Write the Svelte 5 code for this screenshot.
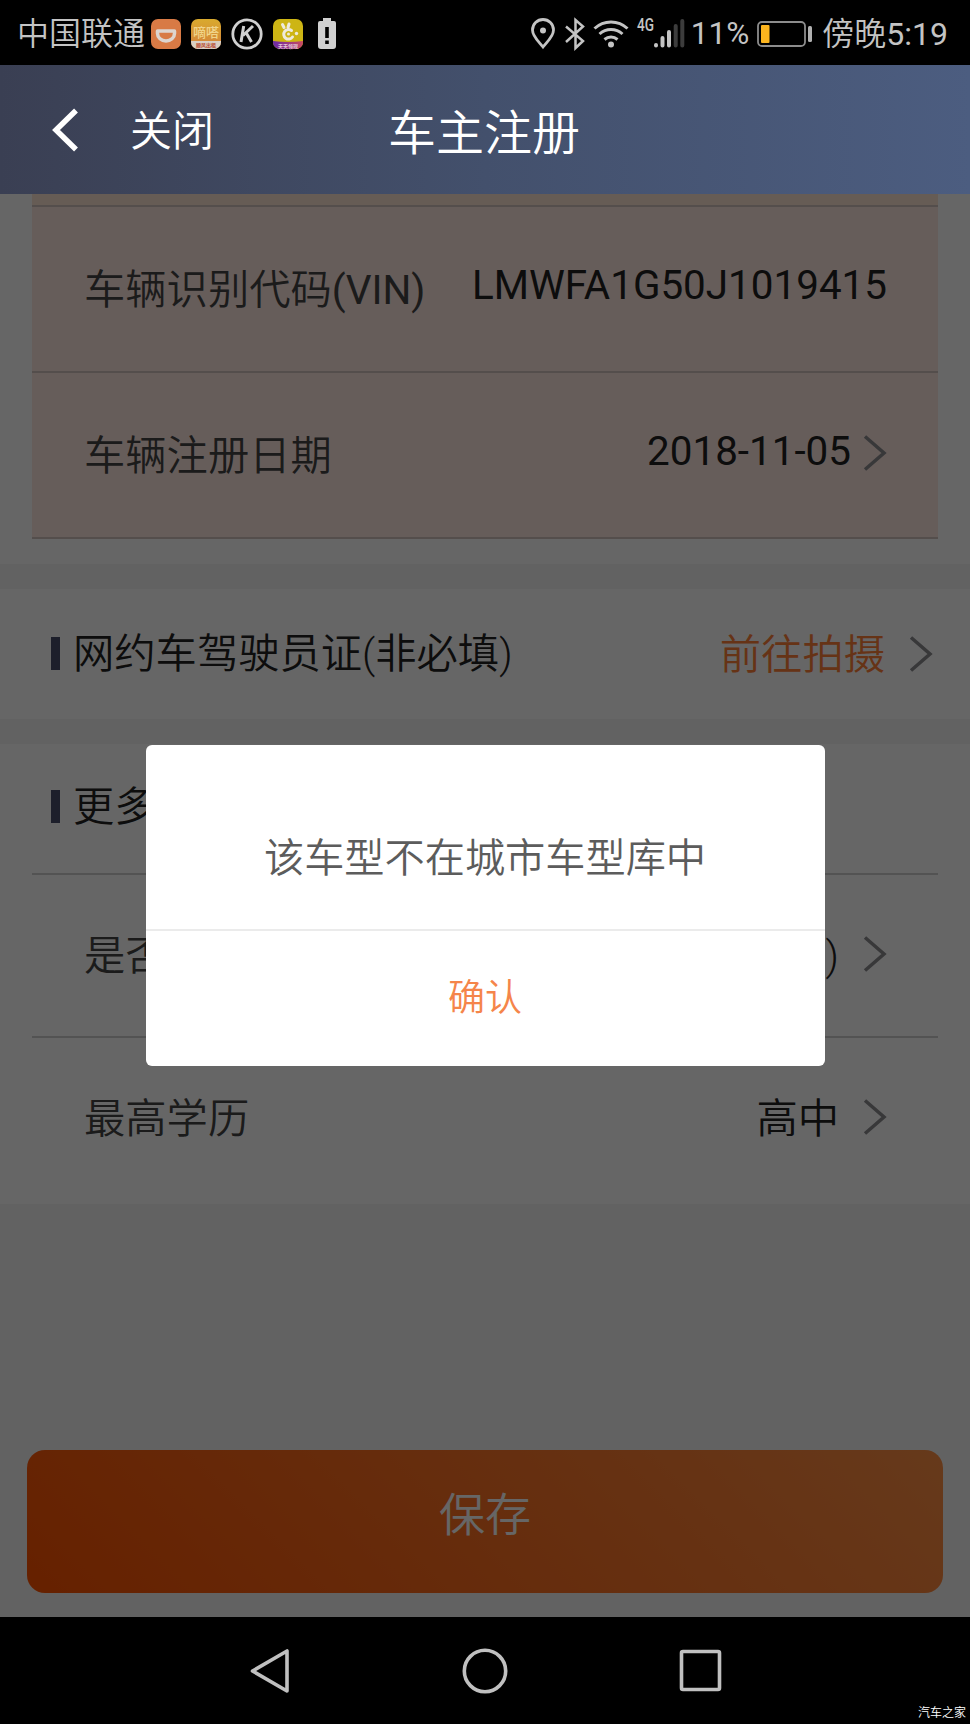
<script lang="ts">
  type Row = { label: string; note?: string; value: string; numeric?: boolean; arrow: boolean };

  const vehicleRows: Row[] = [
    { label: '车辆识别代码', note: '(VIN)', value: 'LMWFA1G50J1019415', numeric: true, arrow: false },
    { label: '车辆注册日期', value: '2018-11-05', numeric: true, arrow: true },
  ];

  const moreRows: Row[] = [
    { label: '是否专职司机', value: '否(兼职)', arrow: true },
    { label: '最高学历', value: '高中', arrow: true },
  ];

  let dialogOpen = $state(true);
</script>

{#snippet chevron()}
  <svg class="chevron" width="24" height="38" viewBox="0 0 24 38">
    <path d="M2 2.5 21 19 2 35.5" />
  </svg>
{/snippet}

{#snippet formRow(row: Row)}
  <div class="row">
    <span class="label">{row.label}{#if row.note}<span class="latin">{row.note}</span>{/if}</span>
    <span class="value" class:numeric={row.numeric}>{row.value}</span>
    {#if row.arrow}{@render chevron()}{/if}
  </div>
{/snippet}

<div class="screen">
  <div class="status">
    <span class="carrier">中国联通</span>
    <div class="notices">
      <svg width="30" height="30" viewBox="0 0 30 30">
        <rect width="30" height="30" rx="7" fill="#d87a45" />
        <path
          d="M6.500 12h17v2.500a8.500 7.500 0 0 1-17 0z"
          fill="none"
          stroke="#ddd5cf"
          stroke-width="3.500"
          stroke-linejoin="round"
        />
      </svg>
      <svg class="dida" width="30" height="30" viewBox="0 0 30 30">
        <defs>
          <linearGradient id="dida-bg" x1="0" y1="0" x2="0" y2="1">
            <stop offset="0" stop-color="#d9aa2e" />
            <stop offset="1" stop-color="#d3803c" />
          </linearGradient>
          <clipPath id="dida-clip"><rect width="30" height="30" rx="7" /></clipPath>
        </defs>
        <g clip-path="url(#dida-clip)">
          <rect width="30" height="30" fill="url(#dida-bg)" />
          <rect y="22" width="30" height="8" fill="#d8cfc4" />
        </g>
        <text x="15" y="18" font-size="13" font-weight="500" fill="#f0d48a" text-anchor="middle">嘀嗒</text>
        <text x="15" y="28" font-size="5" font-weight="700" fill="#b8472c" text-anchor="middle">顺风出租</text>
      </svg>
      <svg width="32" height="32" viewBox="0 0 32 32" fill="none" stroke="#d0d0d0">
        <circle cx="16" cy="16" r="14.200" stroke-width="2.800" />
        <path d="M12.700 8 10 24M22 8l-10 9.500M15 14.500 20.500 24" stroke-width="3" />
      </svg>
      <svg class="zhu" width="30" height="30" viewBox="0 0 30 30">
        <defs>
          <linearGradient id="zhu-foot" x1="0" x2="1">
            <stop offset="0" stop-color="#6a2aa8" />
            <stop offset="1" stop-color="#c94a63" />
          </linearGradient>
          <clipPath id="zhu-clip"><rect width="30" height="30" rx="7" /></clipPath>
        </defs>
        <g clip-path="url(#zhu-clip)">
          <rect width="30" height="30" fill="#cdb514" />
          <path d="M0 22q15 2 30 0v8H0z" fill="url(#zhu-foot)" />
        </g>
        <path
          d="M18.500 11.500a4.800 4.800 0 1 0 1 6.500M9.500 5.500l1.500 3M16 5l-1 3.500"
          fill="none"
          stroke="#eeeadc"
          stroke-width="3"
          stroke-linecap="round"
        />
        <circle cx="15.500" cy="15" r="1.500" fill="#eeeadc" />
        <circle cx="23.500" cy="14.500" r="1.700" fill="#eeeadc" />
        <text x="15" y="28.500" font-size="5" font-weight="700" fill="#e2c6d8" text-anchor="middle">天天领现</text>
      </svg>
      <svg class="low" width="18" height="32" viewBox="0 0 18 32">
        <path
          d="M5 0h8v3h3a2 2 0 0 1 2 2v23a3 3 0 0 1-3 3H3a3 3 0 0 1-3-3V5a2 2 0 0 1 2-2h3z"
          fill="#d0d0d0"
        />
        <path d="M9 9v11M9 22.500v3.500" stroke="#000" stroke-width="3.600" />
      </svg>
    </div>

    <div class="signals">
      <svg width="24" height="31" viewBox="0 0 24 31">
        <path
          d="M12 29C8 24 1.500 18.500 1.500 12a10.500 10.500 0 0 1 21 0C22.500 18.500 16 24 12 29z"
          fill="none"
          stroke="#c4c4c4"
          stroke-width="2.800"
        />
        <circle cx="12" cy="12.500" r="3" fill="#c4c4c4" />
      </svg>
      <svg class="bluetooth" width="20" height="32" viewBox="0 0 20 32">
        <path
          d="M1 8.500 18 23 10.500 30V2L18 8.500 1 24"
          fill="none"
          stroke="#c4c4c4"
          stroke-width="2.500"
        />
      </svg>
      <svg class="wifi" width="36" height="29" viewBox="0 0 36 29">
        <g fill="none" stroke="#c4c4c4" stroke-width="3">
          <path d="M1.500 9.500a24 24 0 0 1 33 0" />
          <path d="M6.500 15a17 17 0 0 1 23 0" />
          <path d="M11.500 20.500a10 10 0 0 1 13 0" />
        </g>
        <circle cx="18" cy="25.500" r="3" fill="#c4c4c4" />
      </svg>
      <svg class="cell" width="49" height="31" viewBox="0 0 49 31">
        <text x="0" y="13" font-size="18" textLength="17" lengthAdjust="spacingAndGlyphs">4G</text>
        <g stroke-width="4" stroke-linecap="round">
          <path d="M19 27v.5M25.500 20v7.500M32 14v13.500" stroke="#c4c4c4" />
          <path d="M38.700 8v19.500M45.300 3v24.500" stroke="#3c3c3c" />
        </g>
      </svg>
      <span class="percent latin">11%</span>
      <svg class="battery" width="56" height="28" viewBox="0 0 56 28">
        <rect x="1" y="2" width="47" height="24" rx="4" fill="none" stroke="#8c8c8c" stroke-width="1.800" />
        <rect x="4" y="5" width="8.500" height="18" rx="1" fill="#fdb51e" />
        <rect x="51" y="6" width="4" height="16" rx="1.500" fill="#b0b0b0" />
      </svg>
      <span class="clock">傍晚<span class="latin">5:19</span></span>
    </div>
  </div>

  <header class="header">
    <button type="button" class="back" aria-label="返回">
      <svg width="28" height="44" viewBox="0 0 28 44">
        <path d="M24 2.500 4 22l20 19.500" fill="none" stroke="#fff" stroke-width="5.500" />
      </svg>
    </button>
    <button type="button" class="close">关闭</button>
    <h1>车主注册</h1>
  </header>

  <main class="content">
    <section class="card vehicle">
      <div class="previous"></div>
      {#each vehicleRows as row}
        {@render formRow(row)}
      {/each}
    </section>

    <section class="card license">
      <h2><span>网约车驾驶员证(非必填)</span></h2>
      <span class="shoot">前往拍摄</span>
      {@render chevron()}
    </section>

    <section class="card more">
      <h2><span>更多信息</span></h2>
      {#each moreRows as row}
        {@render formRow(row)}
      {/each}
    </section>

    <button type="button" class="save">保存</button>

    {#if dialogOpen}
      <div class="mask"></div>
    {/if}
  </main>

  {#if dialogOpen}
    <div class="dialog" role="alertdialog" aria-label="提示">
      <p>该车型不在城市车型库中</p>
      <button type="button" onclick={() => (dialogOpen = false)}>确认</button>
    </div>
  {/if}

  <nav class="nav">
    <svg width="46" height="46" viewBox="0 0 46 46">
      <path d="M40 3v40L5.500 23z" />
    </svg>
    <svg width="46" height="46" viewBox="0 0 46 46">
      <circle cx="23" cy="23" r="20.700" />
    </svg>
    <svg width="46" height="46" viewBox="0 0 46 46">
      <rect x="4.500" y="3.500" width="38" height="38" rx="1.500" />
    </svg>
    <span class="watermark">汽车之家</span>
  </nav>
</div>

<style>
  :global(body) {
    margin: 0;
    background: #000;
  }

  .screen {
    position: relative;
    display: flex;
    flex-direction: column;
    width: 970px;
    height: 1724px;
    overflow: hidden;
    font-family: Roboto, 'Noto Sans CJK SC', sans-serif;
    font-weight: 350;
  }

  svg {
    display: block;
    flex: none;
    overflow: visible;
  }

  button {
    padding: 0;
    border: 0;
    background: none;
    font: inherit;
    color: inherit;
  }

  h1,
  h2,
  p {
    margin: 0;
    font-weight: inherit;
  }

  .latin {
    font-weight: 400;
  }

  .status {
    display: flex;
    align-items: center;
    box-sizing: border-box;
    height: 65px;
    padding: 2px 22px 0 17px;
    background: #000;
    color: #c4c4c4;
    font-size: 32px;
    line-height: 60px;
    white-space: nowrap;
  }

  .notices {
    display: flex;
    align-items: center;
    margin-left: 6px;
    gap: 10px;
  }

  .low {
    margin-left: 5px;
  }

  .signals {
    display: flex;
    align-items: center;
    margin-left: auto;
  }

  .bluetooth {
    margin-left: 10px;
  }

  .wifi {
    margin-left: 8px;
  }

  .cell {
    margin-left: 8px;
    fill: #c4c4c4;
    font-weight: 500;
  }

  .percent {
    margin-left: 5px;
    font-size: 31.5px;
  }

  .battery {
    margin-left: 8px;
  }

  .clock {
    margin-left: 9px;
  }

  .header {
    display: grid;
    grid-template-columns: 130px 1fr 192px 1fr 132px;
    align-items: center;
    height: 129px;
    background: linear-gradient(90deg, #3a3f53, #43506c 50%, #4c5d80);
    color: #fff;
  }

  .back {
    padding-left: 52px;
  }

  .close {
    padding-bottom: 4px;
    font-size: 42px;
    text-align: left;
  }

  h1 {
    padding-bottom: 2px;
    font-size: 48px;
    text-align: center;
    white-space: nowrap;
  }

  .content {
    position: relative;
    display: flex;
    flex-direction: column;
    height: 1423px;
    background: #f4f4f4;
    color: #222;
    font-size: 41.3px;
  }

  .card {
    background: #fff;
  }

  .vehicle {
    height: 370px;
    padding: 0 32px;
    margin-bottom: 25px;
  }

  .previous {
    height: 11px;
    background: #fee6d4;
    border-bottom: 2px solid #d2c4be;
  }

  .row {
    display: flex;
    align-items: center;
    box-sizing: border-box;
    height: 166px;
    padding: 0 51px 5px 52px;
  }

  .vehicle .row {
    background: #ffe8e1;
    border-bottom: 2px solid #d2c4be;
  }

  .label {
    padding-bottom: 2px;
    color: #444;
  }

  .label .latin {
    font-size: 40.5px;
  }

  .value {
    margin-left: auto;
    padding-bottom: 2px;
  }

  .numeric {
    padding-bottom: 3px;
    font-size: 40.4px;
    font-weight: 400;
  }

  .chevron {
    margin-left: 12px;
    fill: none;
    stroke: #8c8c90;
    stroke-width: 3.5;
  }

  h2 {
    display: flex;
    align-items: center;
    font-size: 41.3px;
  }

  h2::before {
    content: '';
    width: 9px;
    height: 33px;
    margin-right: 13px;
    background: #4a4e6c;
  }

  h2 span {
    padding-bottom: 7px;
  }

  .license {
    display: flex;
    align-items: center;
    box-sizing: border-box;
    height: 130px;
    margin-bottom: 25px;
    padding: 0 37px 1px 51px;
  }

  .shoot {
    margin-left: auto;
    padding-bottom: 6px;
    color: #ff8038;
  }

  .license .chevron {
    margin-left: 24px;
  }

  .more {
    height: 460px;
    padding: 0 32px;
  }

  .more h2 {
    box-sizing: border-box;
    height: 129px;
    padding: 0 0 5px 19px;
  }

  .more .row {
    height: 163px;
    padding-bottom: 4px;
    border-top: 2px solid #d0d0d0;
  }

  .more .label,
  .more .value {
    padding-bottom: 4px;
  }

  .more .chevron {
    margin-left: 24px;
  }

  .save {
    box-sizing: border-box;
    height: 143px;
    margin: auto 27px 24px;
    padding-bottom: 22px;
    border-radius: 18px;
    background: linear-gradient(45deg, #ff5200, #ff9045);
    color: #fff;
    font-size: 46px;
  }

  .mask {
    position: absolute;
    inset: 0;
    background: rgba(0, 0, 0, 0.6);
  }

  .dialog {
    position: absolute;
    top: 745px;
    left: 145.5px;
    display: flex;
    flex-direction: column;
    width: 679px;
    height: 321px;
    border-radius: 6px;
    background: #fff;
    text-align: center;
  }

  .dialog p {
    box-sizing: border-box;
    height: 184px;
    padding-top: 42px;
    color: #5c5c5c;
    font-size: 40.2px;
    line-height: 144px;
  }

  .dialog button {
    flex: 1;
    padding-bottom: 7px;
    border-top: 2px solid #ebebeb;
    color: #f5854a;
    font-size: 37px;
  }

  .nav {
    position: relative;
    display: flex;
    align-items: center;
    justify-content: center;
    gap: 169px;
    height: 107px;
    background: #000;
    fill: none;
    stroke: #c0c0c0;
    stroke-width: 3.6;
    stroke-linejoin: round;
  }

  .watermark {
    position: absolute;
    right: 4px;
    bottom: 2px;
    color: #fff;
    font-size: 12px;
    line-height: 18px;
  }
</style>
